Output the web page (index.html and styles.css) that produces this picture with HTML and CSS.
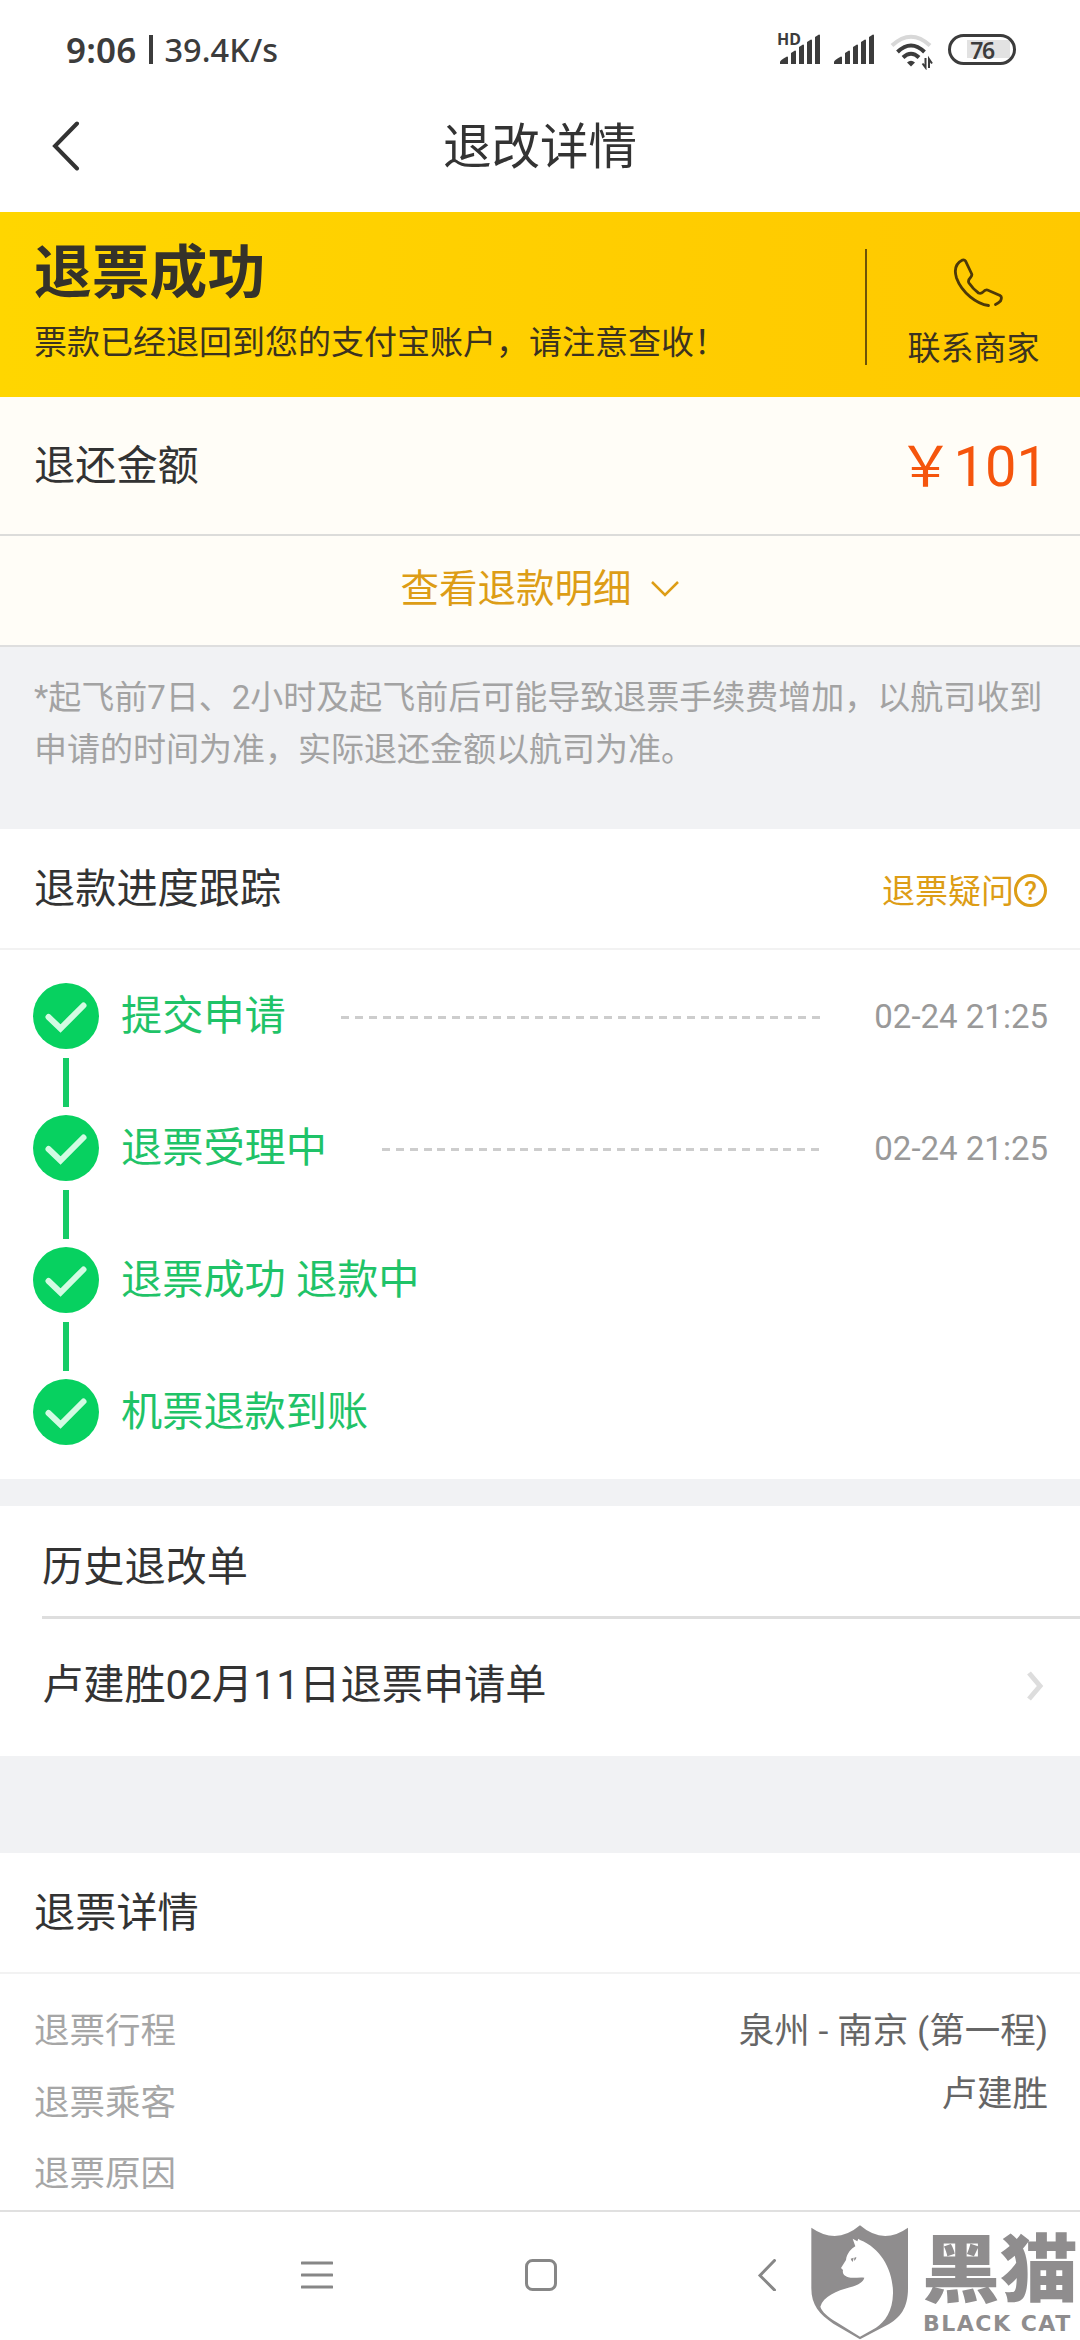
FILE: index.html
```html
<!DOCTYPE html>
<html lang="zh-CN">
<head>
<meta charset="utf-8">
<title>退改详情</title>
<link rel="stylesheet" href="styles.css">
</head>
<body>
<div class="screen">
  <div class="status">
    <div class="status-left"><span class="clock">9:06</span><span class="sep"></span><span class="speed">39.4K/s</span></div>
    <div class="status-right">
      <div class="hd-signal">
        <span class="hd">HD</span>
        <svg class="signal" viewBox="0 0 40 30"><path d="M0 30v-2q0-2 7-5.500q1 0 1 1V30zM11 30V19l4-2.500q1 0 1 1V30zM19 30V13l4-2.500q1 0 1 1V30zM27 30V8l4-2.500q1 0 1 1V30zM35 30V3l4-2.500q1 0 1 1V30z"/></svg>
      </div>
      <svg class="signal second" viewBox="0 0 40 30"><path d="M0 30v-2q0-2 7-5.500q1 0 1 1V30zM11 30V19l4-2.500q1 0 1 1V30zM19 30V13l4-2.500q1 0 1 1V30zM27 30V8l4-2.500q1 0 1 1V30zM35 30V3l4-2.500q1 0 1 1V30z"/></svg>
      <svg class="wifi" viewBox="0 0 44 36" fill="none" stroke="#3c3c3c" stroke-width="4">
        <path d="M2 11.500Q21 -6 40 11.500" stroke="#d8d8d8"/>
        <path d="M7.500 18Q21 5 34.500 18"/>
        <path d="M13 23.500Q21 16 29 23.500"/>
        <path d="M17 28.500Q21 25 25 28.500L21 32.500z" fill="#3c3c3c" stroke="none"/>
        <path d="M35.500 24v9.500l-3-4M39 34v-9l3 4.500" stroke-width="2"/>
      </svg>
      <div class="battery"><span class="charge">76</span></div>
    </div>
  </div>

  <header class="titlebar">
    <svg class="back" viewBox="0 0 30 52"><path d="M25 2.500L3 25L25 47.500"/></svg>
    <h1>退改详情</h1>
  </header>

  <section class="banner">
    <div class="banner-text">
      <h2>退票成功</h2>
      <p>票款已经退回到您的支付宝账户，请注意查收！</p>
    </div>
    <div class="contact">
      <svg class="phone" viewBox="0 0 50 50"><path d="M35.500 47.500C24 46 9 35 3.500 20C1 12 2.500 5.500 9.500 2Q11.500 1.500 12.500 3L18.500 15.500Q19.500 17.500 17.500 19.500Q14.500 22.500 16 25Q20 31 25.500 35Q28 36 30 34Q32 31.500 34.500 32L47 37.500Q49.500 39 47.500 43Q45.500 45 42.500 46.500"/></svg>
      <span>联系商家</span>
    </div>
  </section>

  <section class="refund">
    <div class="amount-row"><span>退还金额</span><span class="price">￥101</span></div>
    <div class="detail-row"><span>查看退款明细</span><svg class="down" viewBox="0 0 30 18"><path d="M2 2L15 15L28 2"/></svg></div>
  </section>

  <p class="note">*起飞前7日、2小时及起飞前后可能导致退票手续费增加，以航司收到<br>申请的时间为准，实际退还金额以航司为准。</p>

  <section class="progress">
    <div class="head"><h3>退款进度跟踪</h3><div class="ask"><span>退票疑问</span><span class="mark">?</span></div></div>
    <ol class="steps">
      <li><svg class="tick" viewBox="0 0 66 66"><circle cx="33" cy="33" r="33"/><path d="M15.500 34L27.500 45.500L50.500 22.500"/></svg><span>提交申请</span><i class="dash"></i><time>02-24 21:25</time></li>
      <li><svg class="tick" viewBox="0 0 66 66"><circle cx="33" cy="33" r="33"/><path d="M15.500 34L27.500 45.500L50.500 22.500"/></svg><span>退票受理中</span><i class="dash"></i><time>02-24 21:25</time></li>
      <li><svg class="tick" viewBox="0 0 66 66"><circle cx="33" cy="33" r="33"/><path d="M15.500 34L27.500 45.500L50.500 22.500"/></svg><span>退票成功 退款中</span></li>
      <li><svg class="tick" viewBox="0 0 66 66"><circle cx="33" cy="33" r="33"/><path d="M15.500 34L27.500 45.500L50.500 22.500"/></svg><span>机票退款到账</span></li>
    </ol>
  </section>

  <section class="history">
    <h3>历史退改单</h3>
    <div class="history-row"><span>卢建胜02月11日退票申请单</span><svg class="go" viewBox="0 0 20 30"><path d="M3 2L14 15L3 28"/></svg></div>
  </section>

  <section class="details">
    <div class="head"><h3>退票详情</h3></div>
    <div class="columns">
      <div class="labels"><span>退票行程</span><span>退票乘客</span><span>退票原因</span></div>
      <div class="values"><span>泉州 - 南京 (第一程)</span><span>卢建胜</span></div>
    </div>
  </section>

  <nav class="navbar">
    <svg viewBox="0 0 32 32"><path d="M1 4H31M1 16H31M1 28H31"/></svg>
    <svg viewBox="0 0 32 32"><rect x="1.500" y="1.500" width="29" height="29" rx="6"/></svg>
    <svg viewBox="0 0 32 32"><path d="M26.500 1.500L12 16.500L26.500 31"/></svg>
  </nav>

  <div class="watermark">
    <svg class="shield" viewBox="213 132 294 348">
      <path fill="#8f8d8e" d="M214 143Q290 196 360 136Q430 196 504 143V325C504 385 480 415 440 436L360 478L280 431C238 403 214 375 214 325Z"/>
      <path fill="#fff" d="M346 199L338 176L352 184L355 176L360 180C425 205 460 275 459 340C458 395 435 425 408 443L360 470L290 427C262 410 246 395 241 380C250 350 290 332 330 322C355 315 370 306 373 293C355 291 340 296 325 292C310 287 307 279 309 270L303 264L318 240C320 220 335 205 346 199Z"/>
      <path fill="#8f8d8e" d="M332 236L341 233L338 246Q334 242 332 236ZM343 233L349 231Q350 239 342 243Z"/>
    </svg>
    <div class="brand"><span class="brand-cn">黑猫</span><span class="brand-en">BLACK CAT</span></div>
  </div>
</div>
</body>
</html>
```

FILE: styles.css
```css
* { box-sizing: border-box; margin: 0; padding: 0; }
body { background: #fff; }
h1, h2, h3 { font-weight: 400; }
svg { display: block; flex: none; }
span, time { white-space: nowrap; }

.screen {
  position: relative;
  width: 1080px;
  height: 2340px;
  overflow: hidden;
  display: flex;
  flex-direction: column;
  background: #fff;
  color: #333;
  font-family: Roboto, "Noto Sans CJK SC", sans-serif;
  font-size: 41.200px;
  line-height: 1.4;
}
.screen > * { flex: none; }

/* status bar */
.status {
  height: 82px;
  padding: 18px 64px 0 66px;
  display: flex;
  justify-content: space-between;
  color: #3c3c3c;
  font-family: "Noto Sans", sans-serif;
}
.status-left { display: flex; align-items: center; height: 63px; }
.clock { font-size: 35px; font-weight: 600; letter-spacing: 0.200px; line-height: 60px; }
.sep { width: 4px; height: 29px; margin: 0 12px 0 12px; background: #3c3c3c; }
.speed { font-size: 32.500px; font-weight: 500; line-height: 60px; }
.status-right { display: flex; align-items: flex-start; padding-top: 16px; }
.hd-signal { position: relative; }
.hd {
  position: absolute;
  left: -3px;
  top: -4px;
  font: 700 16px/18px "Noto Sans", sans-serif;
}
.signal { width: 40px; height: 30px; fill: #3c3c3c; }
.second { margin-left: 14px; }
.wifi { width: 44px; height: 36px; margin-left: 16px; }
.battery {
  width: 68px;
  height: 31px;
  margin-left: 14px;
  border: 3.500px solid #3c3c3c;
  border-radius: 16px;
  display: flex;
  align-items: center;
  justify-content: center;
  background: linear-gradient(#e2e2e2, #e2e2e2) 16px 3px / 43px 18px no-repeat;
}
.charge { font: 600 23px/24px "Noto Sans", sans-serif; letter-spacing: -1.500px; }

/* page title */
.titlebar { height: 130px; position: relative; display: flex; align-items: center; justify-content: center; }
.titlebar h1 { font-size: 48.500px; line-height: 66px; padding-top: 1px; }
.back { position: absolute; left: 52px; top: 39px; width: 30px; height: 52px; fill: none; stroke: #333; stroke-width: 4; stroke-linecap: round; }

/* result banner */
.banner {
  height: 185px;
  display: flex;
  justify-content: space-between;
  align-items: flex-start;
  background: linear-gradient(90deg, #ffd600, #ffcc00 70%, #ffc900);
  color: #3b3220;
}
.banner-text { padding: 25px 0 0 34px; }
.banner h2 { font-size: 57.800px; font-weight: 700; line-height: 72px; color: #35322a; }
.banner p { font-size: 33px; line-height: 50px; margin-top: 9px; white-space: nowrap; }
.contact {
  width: 215px;
  height: 116px;
  margin-top: 37px;
  border-left: 2px solid #6d5308;
  display: flex;
  flex-direction: column;
  align-items: center;
  padding-top: 9px;
}
.phone { width: 50px; height: 50px; margin-left: 8px; fill: none; stroke: #4d3909; stroke-width: 2.800; stroke-linecap: round; }
.contact span { font-size: 33px; line-height: 44px; margin-top: 19px; }

/* refund amount */
.refund { background: #fffdf7; }
.amount-row {
  height: 139px;
  padding: 3px 32px 0 34px;
  display: flex;
  justify-content: space-between;
  align-items: center;
  border-bottom: 2px solid #dcdcda;
}
.price { font-size: 56px; color: #f5550d; }
.detail-row {
  height: 111px;
  padding-bottom: 3px;
  display: flex;
  justify-content: center;
  align-items: center;
  gap: 18px;
  border-bottom: 2px solid #dedede;
  color: #dd9d16;
  font-size: 38.500px;
}
.down { width: 30px; height: 18px; fill: none; stroke: #dd9d16; stroke-width: 2.500; }

.note {
  height: 182px;
  padding: 25px 0 0 34px;
  background: #f1f2f4;
  color: #a3a3a3;
  font-size: 33px;
  line-height: 52px;
  white-space: nowrap;
}

/* progress */
.head {
  height: 121px;
  padding: 0 33px 0 34px;
  display: flex;
  justify-content: space-between;
  align-items: center;
  border-bottom: 2px solid #f2f2f2;
}
h3 { font-size: 41.200px; line-height: 60px; }
.ask { display: flex; align-items: center; color: #dd9d16; font-size: 33px; padding-top: 7px; }
.mark {
  width: 33px;
  height: 33px;
  margin-top: -3px;
  border: 3px solid #dd9d16;
  border-radius: 50%;
  text-align: center;
  font: 500 26px/28px Roboto, sans-serif;
}
.steps { list-style: none; height: 529px; padding: 33px 32px 0 33px; }
.steps li { position: relative; height: 66px; margin-bottom: 66px; display: flex; align-items: center; }
.steps li:not(:last-child)::after {
  content: "";
  position: absolute;
  left: 30px;
  top: 75px;
  width: 6px;
  height: 49px;
  background: #16cc67;
}
.steps span { margin-left: 22px; padding-top: 2px; color: #1fc368; }
.tick { width: 66px; height: 66px; }
.tick circle { fill: #07d160; }
.tick path { fill: none; stroke: #d3fbe3; stroke-width: 6; stroke-linecap: round; }
.dash {
  flex: 1;
  height: 3px;
  margin: 3px 53px 0 55px;
  background: repeating-linear-gradient(90deg, #cdcdcd 0 8px, transparent 8px 13.840px);
}
.steps time { font-size: 33px; padding-top: 2px; color: #999; }

/* history */
.history { height: 277px; border-top: 27px solid #f1f2f4; padding-left: 42px; }
.history h3 { height: 113px; line-height: 122px; border-bottom: 3px solid #dedede; }
.history-row { height: 135px; display: flex; justify-content: space-between; align-items: center; padding: 0 34px 1px 0; }
.go { width: 20px; height: 30px; fill: none; stroke: #ddd; stroke-width: 5; }

/* ticket details */
.details { border-top: 97px solid #f1f2f4; height: 454px; }
.columns { display: flex; justify-content: space-between; padding: 0 32px 0 34px; font-size: 35.500px; }
.labels, .values { display: flex; flex-direction: column; }
.labels { color: #a6a6a6; line-height: 71.500px; padding-top: 22px; }
.values { color: #666; line-height: 63px; padding-top: 26px; text-align: right; }

/* system navigation */
.navbar {
  height: 130px;
  border-top: 2px solid #e0e0e0;
  padding: 47px 300px 0 301px;
  display: flex;
  justify-content: space-between;
}
.navbar svg { width: 32px; height: 32px; fill: none; stroke: #878787; stroke-width: 3; stroke-linecap: round; }

/* logo over the corner */
.watermark { position: absolute; left: 811px; top: 2224px; display: flex; color: #8f8d8e; }
.shield { width: 98px; height: 116px; }
.brand { margin: 10px 0 0 13px; display: flex; flex-direction: column; width: 156px; }
.brand-cn { font: 900 78px/76px Roboto, "Noto Sans CJK SC", sans-serif; transform: scaleY(0.94); }
.brand-en { font: 700 22px/26px "DejaVu Sans", sans-serif; margin: 1px 0 0 1px; letter-spacing: 1.500px; }
```
